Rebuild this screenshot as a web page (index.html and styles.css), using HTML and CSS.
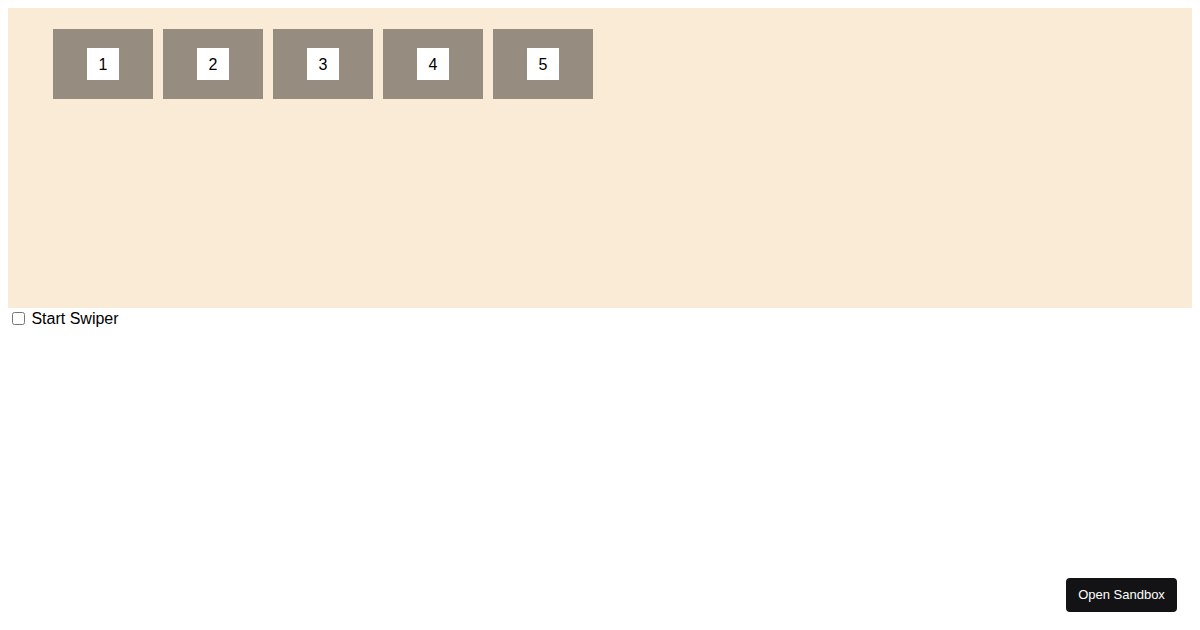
FILE: index.html
```html
<!DOCTYPE html>
<html>
<head>
<meta charset="utf-8">
<link rel="stylesheet" href="styles.css">
</head>
<body>
<div class="swiper">
  <div class="track">
    <div class="slide"><span class="num">1</span></div>
    <div class="slide"><span class="num">2</span></div>
    <div class="slide"><span class="num">3</span></div>
    <div class="slide"><span class="num">4</span></div>
    <div class="slide"><span class="num">5</span></div>
  </div>
</div>
<label class="toggle"><input type="checkbox" class="check"> Start Swiper</label>
<button class="sandbox">Open Sandbox</button>
</body>
</html>
```
FILE: styles.css
```css
body {
  margin: 8px;
  font-family: "Liberation Sans", Arial, sans-serif;
  font-size: 16px;
  color: #000;
  background: #fff;
}
.swiper {
  height: 300px;
  background: #faebd7;
  box-sizing: border-box;
  padding: 21px 45px;
}
.track {
  display: flex;
  gap: 10px;
}
.slide {
  width: 100px;
  height: 70px;
  background: #968d80;
  display: flex;
  align-items: center;
  justify-content: center;
}
.num {
  width: 32px;
  height: 32px;
  background: #fff;
  display: flex;
  align-items: center;
  justify-content: center;
  font-size: 16px;
  padding-top: 1px;
  box-sizing: border-box;
}
.toggle {
  display: block;
  line-height: 20px;
  padding-top: 1px;
}
.check {
  margin: 3px 2px 3px 4px;
  vertical-align: -1px;
}
.sandbox {
  position: fixed;
  right: 23px;
  bottom: 18px;
  width: 111px;
  height: 34px;
  background: #131316;
  color: #fff;
  border: none;
  border-radius: 4px;
  font-family: "Liberation Sans", Arial, sans-serif;
  font-size: 13px;
  padding: 0 0 2px;
}
```
